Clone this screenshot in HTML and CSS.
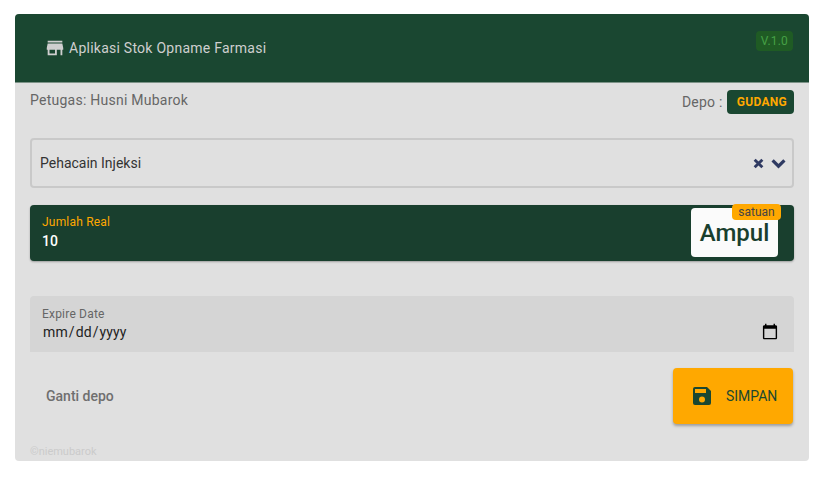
FILE: index.html
```html
<!DOCTYPE html>
<html lang="en">
<head>
    <meta charset="UTF-8">
    <meta name="viewport" content="width=device-width, initial-scale=1.0">
    <title>Aplikasi Stok Opname Farmasi</title>
    <link rel="stylesheet" href="styles.css">
</head>
<body>
    <div class="card">
        <header class="toolbar">
            <div class="toolbar-title">
                <svg class="store-icon" viewBox="0 0 24 24"><path d="M20 4H4v2h16V4zm1 10v-2l-1-5H4l-1 5v2h1v6h10v-6h4v6h2v-6h1zm-9 4H6v-4h6v4z"/></svg>
                <span>Aplikasi Stok Opname Farmasi</span>
            </div>
            <span class="version">V.1.0</span>
        </header>

        <div class="content">
            <div class="info-row">
                <span class="petugas">Petugas: Husni Mubarok</span>
                <div class="depo">
                    <span>Depo :</span>
                    <span class="depo-chip">GUDANG</span>
                </div>
            </div>

            <div class="select-box">
                <span class="select-value">Pehacain Injeksi</span>
                <svg class="clear-icon" viewBox="0 0 10 10"><path d="M1.500 1.500l7 7M8.500 1.500l-7 7"/></svg>
                <svg class="chevron-icon" viewBox="0 0 14 10"><path d="M1.500 2l5.500 5.500L12.500 2"/></svg>
            </div>

            <div class="real-box">
                <div class="real-field">
                    <label class="real-label">Jumlah Real</label>
                    <input class="real-input" type="text" value="10">
                </div>
                <div class="unit">
                    <span class="unit-tag">satuan</span>
                    <span class="unit-name">Ampul</span>
                </div>
            </div>

            <div class="date-box">
                <label class="date-label">Expire Date</label>
                <input class="date-input" type="date">
            </div>

            <div class="actions">
                <button class="btn-ganti">Ganti depo</button>
                <button class="btn-simpan">
                    <svg class="save-icon" viewBox="0 0 18 18"><path d="M2 0h12l4 4v12a2 2 0 0 1-2 2H2a2 2 0 0 1-2-2V2a2 2 0 0 1 2-2z" fill="#1a4731"/><rect x="2" y="2" width="11" height="4" fill="#ffa800"/><circle cx="9" cy="12.500" r="3" fill="#ffa800"/></svg>
                    <span>SIMPAN</span>
                </button>
            </div>

            <div class="copyright">©niemubarok</div>
        </div>
    </div>
</body>
</html>
```

FILE: styles.css
```css
body {
    margin: 0;
    padding: 14px 18px 0 15px;
    background-color: white;
    font-family: Roboto, sans-serif;
}

.card {
    background-color: #e0e0e0;
    border-radius: 4px;
    overflow: hidden;
    height: 447px;
}

.toolbar {
    height: 69px;
    background-color: #1a4731;
    display: flex;
    justify-content: space-between;
    align-items: flex-start;
    padding: 0 16px 0 29px;
    border-bottom: 1px solid #7d9388;
    box-sizing: border-box;
}

.toolbar-title {
    display: flex;
    align-items: center;
    gap: 3px;
    margin-top: 23px;
    font-size: 14px;
    letter-spacing: 0.25px;
    line-height: 22px;
    color: #cfcfcf;
}

.store-icon {
    width: 22px;
    height: 22px;
    fill: #cfcfcf;
}

.version {
    margin-top: 17px;
    padding: 0 5px;
    height: 20px;
    line-height: 20px;
    font-size: 12px;
    letter-spacing: 0.2px;
    color: #46a046;
    background-color: #1f5b24;
    border-radius: 4px;
}

.content {
    padding: 0 15px;
}

.info-row {
    height: 55px;
    display: flex;
    justify-content: space-between;
    align-items: flex-start;
    color: #666;
    font-size: 14px;
    letter-spacing: 0.25px;
}

.petugas {
    margin-top: 8px;
    line-height: 18px;
}

.depo {
    display: flex;
    align-items: center;
    gap: 4px;
    margin-top: 7px;
}

.depo-chip {
    height: 24px;
    line-height: 24px;
    padding: 0 7px 0 10px;
    font-size: 12px;
    font-weight: 700;
    letter-spacing: 0.3px;
    color: #ffa800;
    background-color: #1a4731;
    border-radius: 4px;
}

.select-box {
    height: 50px;
    box-sizing: border-box;
    border: 2px solid #c9c9c9;
    border-radius: 4px;
    display: flex;
    align-items: center;
    padding: 0 6px 0 8px;
    font-size: 14px;
    color: #333;
}

.select-value {
    flex: 1;
}

.clear-icon {
    width: 11px;
    height: 11px;
    fill: none;
    stroke: #2f3a62;
    stroke-width: 2.600;
}

.chevron-icon {
    width: 15px;
    height: 11px;
    margin-left: 7px;
    fill: none;
    stroke: #2f3a62;
    stroke-width: 3;
}

.real-box {
    margin-top: 17px;
    height: 56px;
    background-color: #193f2e;
    border-radius: 4px;
    box-shadow: 0 1px 2px rgba(0, 0, 0, 0.3);
    display: flex;
    justify-content: space-between;
    padding: 0 16px 0 12px;
}

.real-field {
    display: flex;
    flex-direction: column;
    padding-top: 10px;
}

.real-label {
    font-size: 12px;
    line-height: 14px;
    letter-spacing: 0.2px;
    color: #ffa800;
}

.real-input {
    background: none;
    border: none;
    outline: none;
    padding: 0;
    margin-top: 3px;
    width: 200px;
    height: 18px;
    font-family: inherit;
    font-size: 14px;
    font-weight: 500;
    color: white;
}

.unit {
    position: relative;
    width: 87px;
    height: 49px;
    margin-top: 3px;
    background-color: #fbfbfb;
    border-radius: 4px;
    display: flex;
    align-items: center;
    justify-content: center;
}

.unit-name {
    margin-top: 1px;
    font-size: 24px;
    font-weight: 500;
    color: #193f2e;
}

.unit-tag {
    position: absolute;
    top: -4px;
    right: -3px;
    width: 49px;
    height: 16px;
    line-height: 16px;
    text-align: center;
    font-size: 12px;
    color: #444;
    background-color: #ffa800;
    border-radius: 4px;
}

.date-box {
    margin-top: 35px;
    height: 56px;
    box-sizing: border-box;
    background-color: #d5d5d5;
    border-radius: 4px 4px 0 0;
    padding: 11px 12px 0;
    display: flex;
    flex-direction: column;
}

.date-label {
    font-size: 12px;
    line-height: 14px;
    letter-spacing: 0.2px;
    color: #666;
}

.date-input {
    background: none;
    border: none;
    outline: none;
    padding: 0;
    margin-top: 1px;
    height: 20px;
    font-family: inherit;
    font-size: 14px;
    letter-spacing: 0.1px;
    color: #222;
}

.date-input::-webkit-calendar-picker-indicator {
    width: 18px;
    height: 18px;
    padding: 0;
    margin-right: 3px;
    opacity: 1;
}

.actions {
    margin-top: 16px;
    display: flex;
    justify-content: space-between;
    align-items: center;
}

.btn-ganti {
    background: none;
    border: none;
    padding: 0 16px;
    font-family: inherit;
    font-size: 14px;
    font-weight: 500;
    color: #6f6f6f;
}

.btn-simpan {
    width: 120px;
    height: 56px;
    margin-right: 1px;
    background-color: #ffa800;
    border: none;
    border-radius: 4px;
    box-shadow: 0 2px 3px rgba(0, 0, 0, 0.3);
    display: flex;
    align-items: center;
    gap: 15px;
    padding: 0 0 0 20px;
    font-family: inherit;
    font-size: 14px;
    color: #1a4731;
}

.save-icon {
    width: 18px;
    height: 18px;
}

.copyright {
    margin-top: 21px;
    font-size: 11px;
    line-height: 13px;
    color: #cbcbcb;
}
```
